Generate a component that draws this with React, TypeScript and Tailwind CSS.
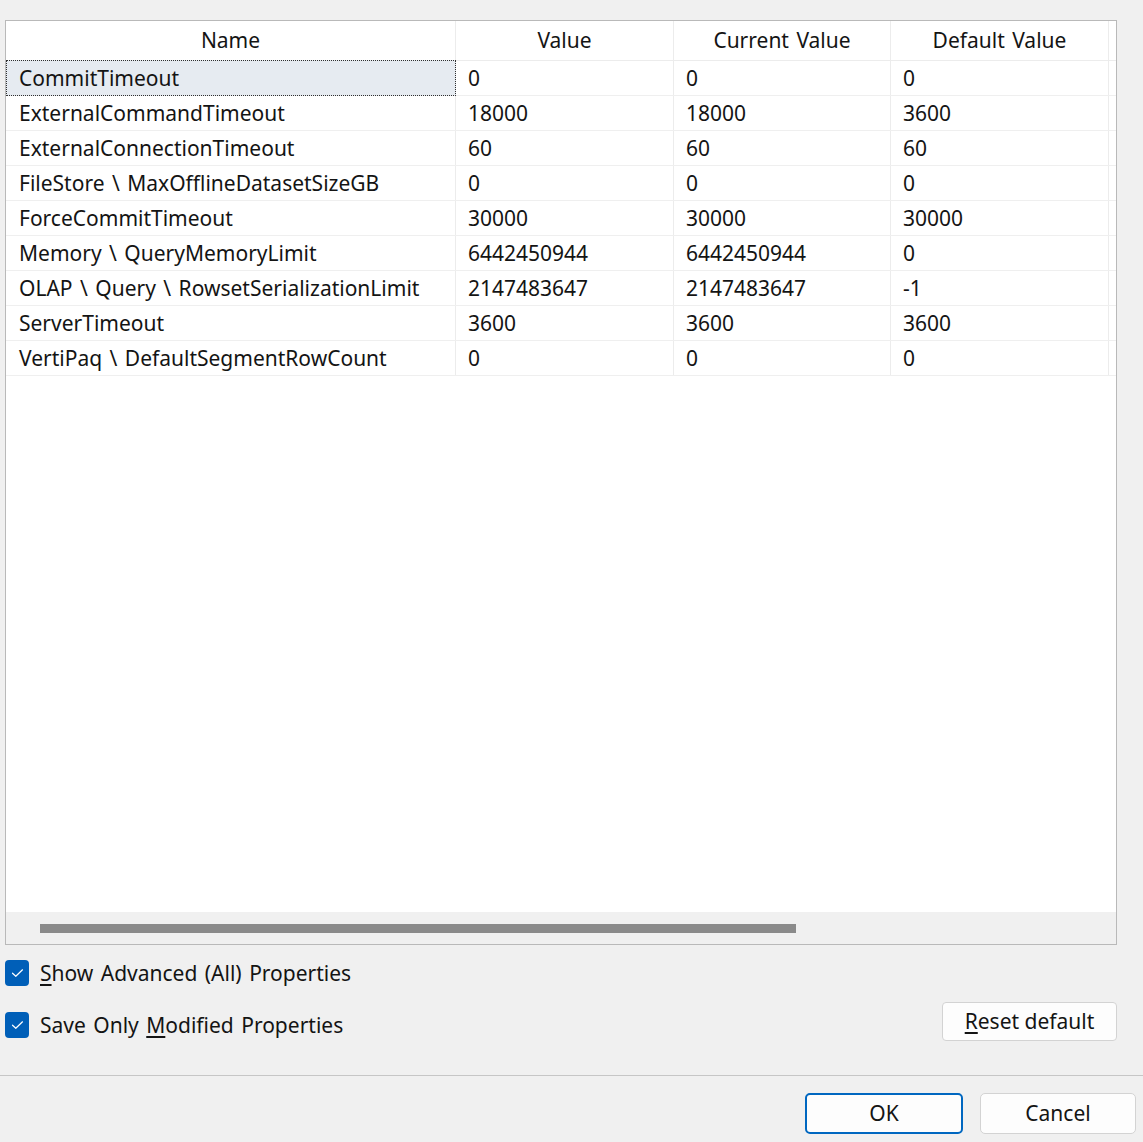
import React from "react"

const rows = [
  ["CommitTimeout", "0", "0", "0"],
  ["ExternalCommandTimeout", "18000", "18000", "3600"],
  ["ExternalConnectionTimeout", "60", "60", "60"],
  ["FileStore \\ MaxOfflineDatasetSizeGB", "0", "0", "0"],
  ["ForceCommitTimeout", "30000", "30000", "30000"],
  ["Memory \\ QueryMemoryLimit", "6442450944", "6442450944", "0"],
  ["OLAP \\ Query \\ RowsetSerializationLimit", "2147483647", "2147483647", "-1"],
  ["ServerTimeout", "3600", "3600", "3600"],
  ["VertiPaq \\ DefaultSegmentRowCount", "0", "0", "0"],
]

const widths = ["w-[450px]", "w-[218px]", "w-[217px]", "w-[218px]"]

function Check() {
  return (
    <span className="flex h-[26px] w-[24px] shrink-0 items-center justify-center rounded-[4px] bg-[#005fb8]">
      <svg width="13" height="10" viewBox="0 0 13 10" fill="none">
        <path d="M1.5 5.2 L4.8 8.3 L11.5 1.8" stroke="white" strokeWidth="1.2" strokeLinecap="round" strokeLinejoin="round" />
      </svg>
    </span>
  )
}

export default function App() {
  return (
    <div
      className="flex h-[1142px] w-[1143px] flex-col bg-[#f0f0f0] text-[21px] text-[#141414] [word-spacing:2px]"
      style={{ fontFamily: '"Noto Sans", "Open Sans", sans-serif' }}
    >
      <div className="ml-[5px] mt-[20px] flex h-[925px] w-[1112px] flex-col border border-[#b9b9b9] bg-white">
        {/* header */}
        <div className="flex h-[40px] shrink-0 border-b border-[#ececec]">
          {["Name", "Value", "Current Value", "Default Value"].map((h, i) => (
            <div
              key={h}
              className={`${widths[i]} flex items-center justify-center border-r border-[#ececec] leading-none`}
            >
              {h}
            </div>
          ))}
          <div className="flex-1" />
        </div>

        {rows.map((r, ri) => (
          <div key={r[0]} className="flex h-[35px] shrink-0 border-b border-[#efefef]">
            {r.map((c, ci) => {
              const selected = ri === 0 && ci === 0
              return (
                <div
                  key={ci}
                  className={
                    selected
                      ? `${widths[ci]} -mt-px flex h-[36px] items-center border border-dotted border-[#303030] bg-[#e6ebf1] pl-[12px] leading-none`
                      : `${widths[ci]} flex items-center border-r border-[#ececec] leading-none ${
                          ci === 0 ? "pl-[13px]" : "pl-[12px]"
                        }`
                  }
                >
                  {c}
                </div>
              )
            })}
            <div className="flex-1" />
          </div>
        ))}

        <div className="flex-1" />

        {/* horizontal scrollbar */}
        <div className="flex h-[32px] shrink-0 items-center bg-[#f0f0f0] pl-[34px]">
          <div className="h-[9px] w-[756px] bg-[#8a8a8a]" />
        </div>
      </div>

      {/* options */}
      <div className="flex items-start justify-between pl-[5px] pr-[26px]">
        <div className="flex flex-col">
          <label className="mt-[15px] flex h-[26px] items-center gap-[11px] leading-none">
            <Check />
            <span>
              <span className="underline underline-offset-[3px]">S</span>how Advanced (All) Properties
            </span>
          </label>
          <label className="mt-[26px] flex h-[26px] items-center gap-[11px] leading-none">
            <Check />
            <span>
              Save Only <span className="underline underline-offset-[3px]">M</span>odified Properties
            </span>
          </label>
        </div>
        <button className="mt-[57px] flex h-[39px] w-[175px] items-center justify-center rounded-[4px] border border-[#d3d3d3] bg-[#fdfdfd] leading-none">
          <span>
            <span className="underline underline-offset-[3px]">R</span>eset default
          </span>
        </button>
      </div>

      <div className="mt-[34px] h-px w-full shrink-0 bg-[#c6c6c6]" />

      <div className="flex justify-end gap-[17px] pr-[7px] pt-[17px]">
        <button className="flex h-[41px] w-[158px] items-center justify-center rounded-[5px] border-2 border-[#0067c0] bg-[#fdfdfd] leading-none">
          OK
        </button>
        <button className="flex h-[41px] w-[156px] items-center justify-center rounded-[5px] border border-[#d3d3d3] bg-[#fdfdfd] leading-none">
          Cancel
        </button>
      </div>
    </div>
  )
}
